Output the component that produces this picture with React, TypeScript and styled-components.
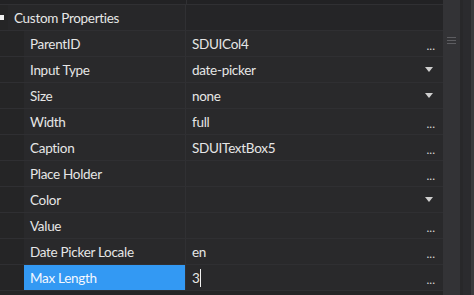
import React from 'react'
import styled, { createGlobalStyle } from 'styled-components'

type Kind = 'text' | 'select'

interface Prop {
  name: string
  value: string
  kind: Kind
}

const props: Prop[] = [
  { name: 'ParentID', value: 'SDUICol4', kind: 'text' },
  { name: 'Input Type', value: 'date-picker', kind: 'select' },
  { name: 'Size', value: 'none', kind: 'select' },
  { name: 'Width', value: 'full', kind: 'text' },
  { name: 'Caption', value: 'SDUITextBox5', kind: 'text' },
  { name: 'Place Holder', value: '', kind: 'text' },
  { name: 'Color', value: '', kind: 'select' },
  { name: 'Value', value: '', kind: 'text' },
  { name: 'Date Picker Locale', value: 'en', kind: 'text' },
]

const GlobalStyle = createGlobalStyle`
  html, body {
    margin: 0;
    padding: 0;
    background: #252526;
    overflow: hidden;
  }
  body {
    font-family: Lato, "Open Sans", sans-serif;
  }
`

const App: React.FC = () => {
  return (
    <>
      <GlobalStyle />
      <Window>
        <Grid>
          <TopStrip>
            <StripLabel />
            <StripValue />
          </TopStrip>
          <Header>
            <Collapse />
            <HeaderTitle>Custom Properties</HeaderTitle>
            <HeaderFill />
          </Header>
          {props.map((p) => (
            <Row key={p.name}>
              <Indent />
              <Label>{p.name}</Label>
              <Value>
                <span>{p.value}</span>
                {p.kind === 'select' ? <Caret /> : <Dots>...</Dots>}
              </Value>
            </Row>
          ))}
          <Row>
            <Indent />
            <Label $selected>Max Length</Label>
            <Value>
              <span>
                3<Cursor />
              </span>
              <Dots>...</Dots>
            </Value>
          </Row>
        </Grid>
        <ScrollBar>
          <Grip>
            <i />
            <i />
            <i />
          </Grip>
        </ScrollBar>
        <Edge />
      </Window>
    </>
  )
}

const Window = styled.div`
  display: flex;
  width: 474px;
  height: 295px;
  background: #252526;
  color: #e6e6e6;
  font-size: 13.5px;
  letter-spacing: -0.3px;
`

const Grid = styled.div`
  display: flex;
  flex-direction: column;
  width: 443px;
`

const TopStrip = styled.div`
  display: flex;
  height: 4px;
  border-bottom: 1px solid #303033;
  div:first-child {
    border-right: 1px solid #303033;
  }
`

const StripLabel = styled.div`
  width: 186px;
  background: #222224;
`

const StripValue = styled.div`
  flex: 1;
  background: #222224;
`

const Header = styled.div`
  position: relative;
  display: flex;
  height: 25px;
  border-bottom: 1px solid #2f2f32;
`

const Collapse = styled.div`
  position: absolute;
  left: 0;
  top: 10px;
  width: 4px;
  height: 5px;
  background: #f0f0f0;
`

const HeaderTitle = styled.div`
  width: 178px;
  margin-left: 8px;
  padding-left: 6px;
  box-sizing: border-box;
  display: flex;
  align-items: center;
  background: #272729;
  border-right: 1px solid #303033;
`

const HeaderFill = styled.div`
  flex: 1;
  background: #252527;
`

const Row = styled.div`
  display: flex;
  height: 25px;
  border-bottom: 1px solid #2f2f32;
`

const Indent = styled.div`
  width: 24px;
  background: #252526;
`

const Label = styled.div<{ $selected?: boolean }>`
  width: 162px;
  padding-left: 6px;
  box-sizing: border-box;
  display: flex;
  align-items: center;
  background: ${(p) => (p.$selected ? '#3399f3' : '#29292b')};
  color: ${(p) => (p.$selected ? '#f4f8ff' : '#e6e6e6')};
  border-right: 1px solid #303033;
  white-space: nowrap;
`

const Value = styled.div`
  flex: 1;
  display: flex;
  align-items: center;
  justify-content: space-between;
  padding: 0 8px 0 6px;
  background: #29292b;
  span {
    display: flex;
    align-items: center;
  }
`

const Dots = styled.div`
  font-size: 12px;
  color: #d8d8d8;
  letter-spacing: 0px;
  padding-top: 4px;
`

const Caret = styled.div`
  width: 0;
  height: 0;
  border-left: 4px solid transparent;
  border-right: 4px solid transparent;
  border-top: 5px solid #cfcfcf;
  margin-right: 2px;
`

const Cursor = styled.i`
  display: inline-block;
  width: 1px;
  height: 18px;
  background: #f0f0f0;
  margin-left: 0px;
`

const ScrollBar = styled.div`
  width: 17px;
  background: #333336;
  display: flex;
  justify-content: center;
  padding-top: 37px;
  box-sizing: border-box;
`

const Grip = styled.div`
  display: flex;
  flex-direction: column;
  gap: 2px;
  i {
    display: block;
    width: 9px;
    height: 1px;
    background: #5d5d61;
  }
`

const Edge = styled.div`
  flex: 1;
  background: #2b2b2e;
  border-left: 3px solid #28282a;
  border-right: 3px solid #3a3a3d;
`

export default App
